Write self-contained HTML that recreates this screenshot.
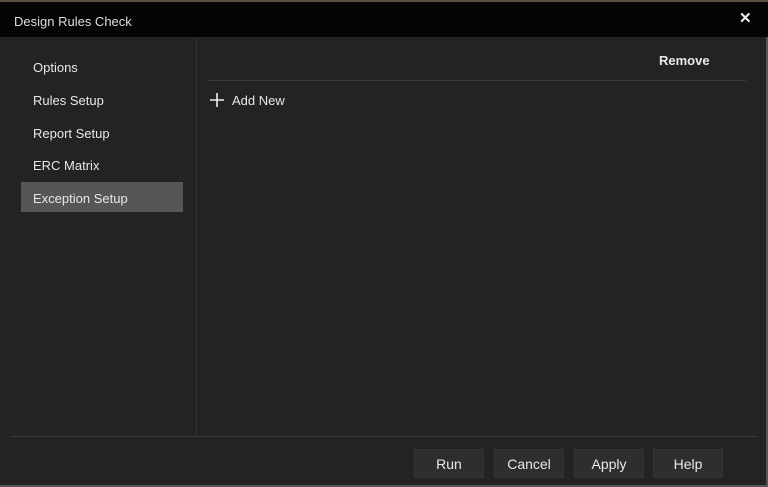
<!DOCTYPE html>
<html><head><style>
*{margin:0;padding:0;box-sizing:border-box}
body{width:768px;height:487px;background:#222322;font-family:"Liberation Sans",sans-serif;color:#e8e8e8;position:relative;overflow:hidden;font-size:13px}
.top{position:absolute;left:0;top:0;width:768px;height:2px;background:#5a5040}
.title{position:absolute;left:0;top:2px;width:768px;height:35px;background:#050505}
.title span{position:absolute;left:14px;top:12px;font-size:13px;color:#ddd}
.x{position:absolute;left:739px;top:7px;font-size:15px;font-weight:bold;color:#eee}
.vsep{position:absolute;left:196px;top:38px;width:1px;height:398px;background:#333}
.hsep{position:absolute;left:10px;top:436px;width:748px;height:1px;background:#3a3a3a}
.nav{position:absolute;left:21px;width:162px;height:30px;padding:9px 0 0 12px;font-size:13px}
.sel{background:#555655}
.rem{position:absolute;left:659px;top:53px;font-weight:bold;font-size:13px}
.line{position:absolute;left:208px;top:80px;width:538px;height:1px;background:#3a3a3a}
.add{position:absolute;left:232px;top:93px}
.plus{position:absolute;left:209px;top:92px;width:16px;height:16px}
.btn{position:absolute;top:449px;width:70px;height:29px;background:#2d2e2d;border:1px solid #333;text-align:center;line-height:28px;font-size:14px}
.edge{position:absolute;right:0;top:37px;width:2px;height:450px;background:#555}
.bot{position:absolute;left:0;top:485px;width:768px;height:2px;background:#555}
</style></head><body>
<div class="top"></div>
<div class="title"><span>Design Rules Check</span><div class="x">✕</div></div>
<div class="vsep"></div>
<div class="nav" style="top:51px">Options</div>
<div class="nav" style="top:84px">Rules Setup</div>
<div class="nav" style="top:117px">Report Setup</div>
<div class="nav" style="top:149px">ERC Matrix</div>
<div class="nav sel" style="top:182px">Exception Setup</div>
<div class="rem">Remove</div>
<div class="line"></div>
<svg class="plus" viewBox="0 0 16 16"><path d="M8 1v14M1 8h14" stroke="#eee" stroke-width="1.6"/></svg>
<div class="add">Add New</div>
<div class="hsep"></div>
<div class="btn" style="left:414px">Run</div>
<div class="btn" style="left:494px">Cancel</div>
<div class="btn" style="left:574px">Apply</div>
<div class="btn" style="left:653px">Help</div>
<div class="edge"></div>
<div class="bot"></div>
</body></html>
